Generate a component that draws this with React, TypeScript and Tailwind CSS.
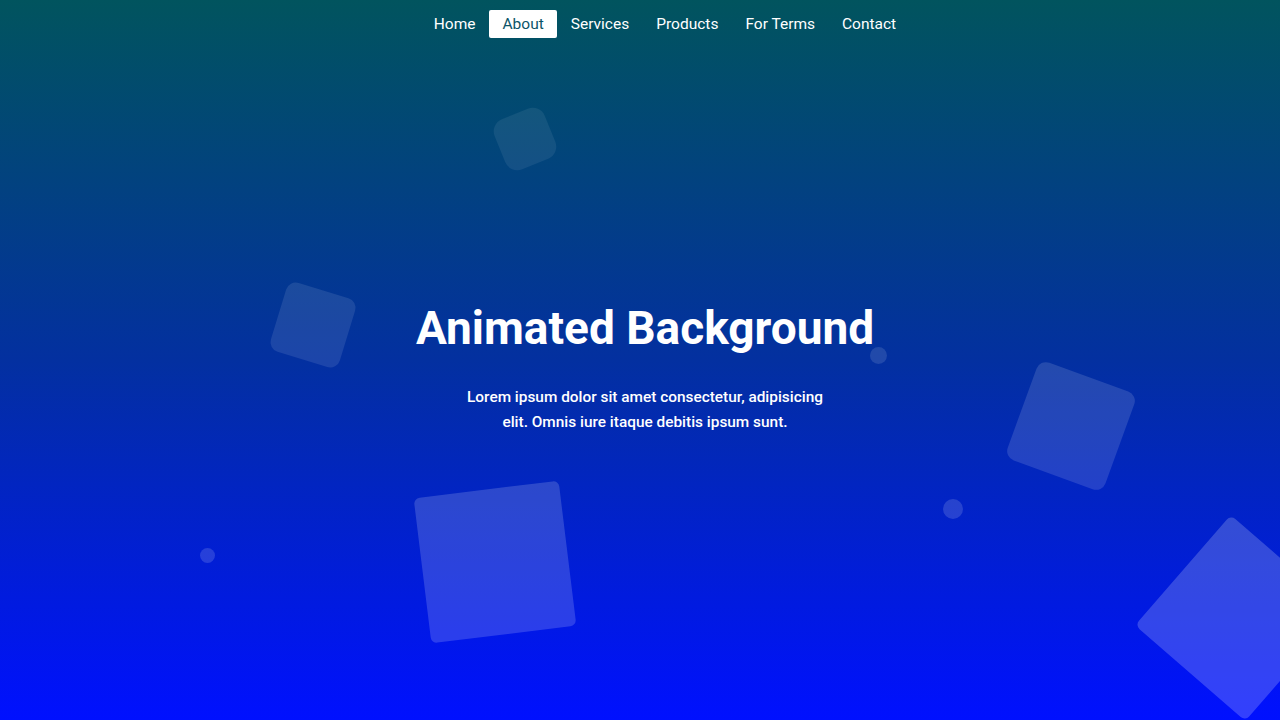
import React from "react";

const navItems = ["Home", "About", "Services", "Products", "For Terms", "Contact"];

export default function App() {
  return (
    <div
      className="relative h-[720px] w-full overflow-hidden bg-[linear-gradient(to_bottom,#01545e_0%,#0330a0_50%,#0010ff_100%)]"
      style={{ fontFamily: "Roboto, 'Noto Sans', sans-serif" }}
    >
      {/* floating shapes */}
      <div className="absolute left-[498px] top-[112px] h-[54px] w-[54px] -rotate-[22deg] rounded-[13px] bg-white/[0.07]" />
      <div className="absolute left-[277px] top-[289px] h-[72px] w-[72px] rotate-[17deg] rounded-[10px] bg-white/[0.1]" />
      <div className="absolute left-[1019px] top-[374px] h-[104px] w-[104px] rotate-[20deg] rounded-[10px] bg-white/[0.13]" />
      <div className="absolute left-[422px] top-[489px] h-[146px] w-[146px] -rotate-[7deg] rounded-[6px] bg-white/[0.17]" />
      <div className="absolute left-[1165px] top-[545px] h-[146px] w-[146px] rotate-[41deg] rounded-[6px] bg-white/[0.2]" />
      <div className="absolute left-[870px] top-[347px] h-[17px] w-[17px] rounded-full bg-white/[0.12]" />
      <div className="absolute left-[943px] top-[499px] h-[20px] w-[20px] rounded-full bg-white/[0.15]" />
      <div className="absolute left-[200px] top-[548px] h-[15px] w-[15px] rounded-full bg-white/[0.15]" />

      <div className="relative flex flex-col items-center">
        <nav className="flex w-full justify-center pl-[50px] pt-[10px]">
          {navItems.map((item) => (
            <a
              key={item}
              className={
                item === "About"
                  ? "flex h-[28px] items-center rounded-[2px] bg-white px-[13.5px] pt-px text-[15.5px] text-[#0b5468]"
                  : "flex h-[28px] items-center px-[13.5px] pt-px text-[15.5px] text-white"
              }
            >
              {item}
            </a>
          ))}
        </nav>

        <div className="flex w-full flex-col items-center pl-[10px]">
          <h1 className="mt-[267px] text-[46px] font-bold leading-[46px] text-white">
            Animated Background
          </h1>
          <p className="mt-[34px] w-[370px] text-center text-[15.4px] font-medium leading-[25px] text-white">
            Lorem ipsum dolor sit amet consectetur, adipisicing elit. Omnis iure itaque debitis ipsum sunt.
          </p>
        </div>
      </div>
    </div>
  );
}
